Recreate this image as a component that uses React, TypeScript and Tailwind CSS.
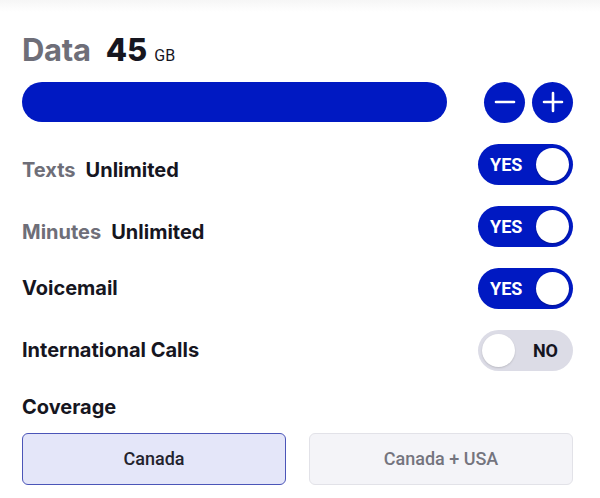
import { useState } from "react";

const labelFont = { fontFamily: "Inter, 'Noto Sans', sans-serif" };

interface ToggleProps {
  on: boolean;
  onClick: () => void;
}

const Toggle = ({ on, onClick }: ToggleProps) => (
  <button
    onClick={onClick}
    className={
      on
        ? "flex h-[41px] w-[95px] items-center justify-between rounded-full bg-[#0019c2] pl-[12px] pr-[4px] font-['Roboto'] text-[18px] font-bold text-white"
        : "flex h-[41px] w-[95px] items-center justify-between rounded-full bg-[#dcdce6] pl-[4px] pr-[15px] font-['Roboto'] text-[18px] font-bold text-[#15151f]"
    }
  >
    {on ? (
      <>
        <span>YES</span>
        <span className="h-[33px] w-[33px] rounded-full bg-white shadow-[0_1px_2px_rgba(0,0,0,0.25)]" />
      </>
    ) : (
      <>
        <span className="h-[33px] w-[33px] rounded-full bg-white shadow-[0_1px_2px_rgba(0,0,0,0.15)]" />
        <span>NO</span>
      </>
    )}
  </button>
);

export default function App() {
  const [texts, setTexts] = useState(true);
  const [minutes, setMinutes] = useState(true);
  const [voicemail, setVoicemail] = useState(true);
  const [intl, setIntl] = useState(false);
  const [coverage, setCoverage] = useState("ca");

  return (
    <div className="min-h-[498px] w-[600px] bg-gradient-to-b from-[#f6f6f6] to-white to-[12px] pl-[22px] pr-[27px] pt-[27px] text-[#16161f]">
      <div className="flex items-baseline" style={labelFont}>
        <span className="text-[31px] font-bold tracking-[-0.3px] text-[#6e6e78]">Data</span>
        <span className="ml-[15px] text-[31px] font-extrabold text-[#16161f]">45</span>
        <span className="ml-[7px] font-['Roboto'] text-[16px] text-[#16161f]">GB</span>
      </div>

      <div className="mt-[8px] flex items-center justify-between">
        <div className="h-[40px] w-[425px] rounded-full bg-[#0019c2]" />
        <div className="flex gap-[7px]">
          <button className="flex h-[41px] w-[41px] items-center justify-center rounded-full bg-[#0019c2]">
            <svg width="24" height="24" viewBox="0 0 24 24" fill="none" stroke="white" strokeWidth="2.6" strokeLinecap="round">
              <path d="M3 12h18" />
            </svg>
          </button>
          <button className="flex h-[41px] w-[41px] items-center justify-center rounded-full bg-[#0019c2]">
            <svg width="24" height="24" viewBox="0 0 24 24" fill="none" stroke="white" strokeWidth="2.6" strokeLinecap="round">
              <path d="M3 12h18M12 3v18" />
            </svg>
          </button>
        </div>
      </div>

      <div className="mt-[21px] flex flex-col gap-[21px]" style={labelFont}>
        <div className="flex items-center justify-between">
          <div className="mt-[11px] text-[20px] font-bold">
            <span className="text-[#6e6e78]">Texts</span>
            <span className="ml-[10px]">Unlimited</span>
          </div>
          <Toggle on={texts} onClick={() => setTexts(!texts)} />
        </div>
        <div className="flex items-center justify-between">
          <div className="mt-[11px] text-[20px] font-bold">
            <span className="text-[#6e6e78]">Minutes</span>
            <span className="ml-[10px]">Unlimited</span>
          </div>
          <Toggle on={minutes} onClick={() => setMinutes(!minutes)} />
        </div>
        <div className="flex items-center justify-between">
          <div className="text-[20px] font-bold">Voicemail</div>
          <Toggle on={voicemail} onClick={() => setVoicemail(!voicemail)} />
        </div>
        <div className="flex items-center justify-between">
          <div className="text-[20px] font-bold">International Calls</div>
          <Toggle on={intl} onClick={() => setIntl(!intl)} />
        </div>
      </div>

      <div className="mt-[21px] text-[20px] font-bold" style={labelFont}>
        Coverage
      </div>

      <div className="mt-[11px] grid grid-cols-2 gap-[23px] font-['Roboto'] text-[18px] font-medium">
        <button
          onClick={() => setCoverage("ca")}
          className={
            coverage === "ca"
              ? "h-[52px] rounded-[6px] border border-[#4b55b8] bg-[#e4e6f9] text-[#23232d]"
              : "h-[52px] rounded-[6px] border border-[#e2e2e8] bg-[#f4f4f8] text-[#74747e]"
          }
        >
          Canada
        </button>
        <button
          onClick={() => setCoverage("us")}
          className={
            coverage === "us"
              ? "h-[52px] rounded-[6px] border border-[#4b55b8] bg-[#e4e6f9] text-[#23232d]"
              : "h-[52px] rounded-[6px] border border-[#e2e2e8] bg-[#f4f4f8] text-[#74747e]"
          }
        >
          Canada + USA
        </button>
      </div>
    </div>
  );
}
